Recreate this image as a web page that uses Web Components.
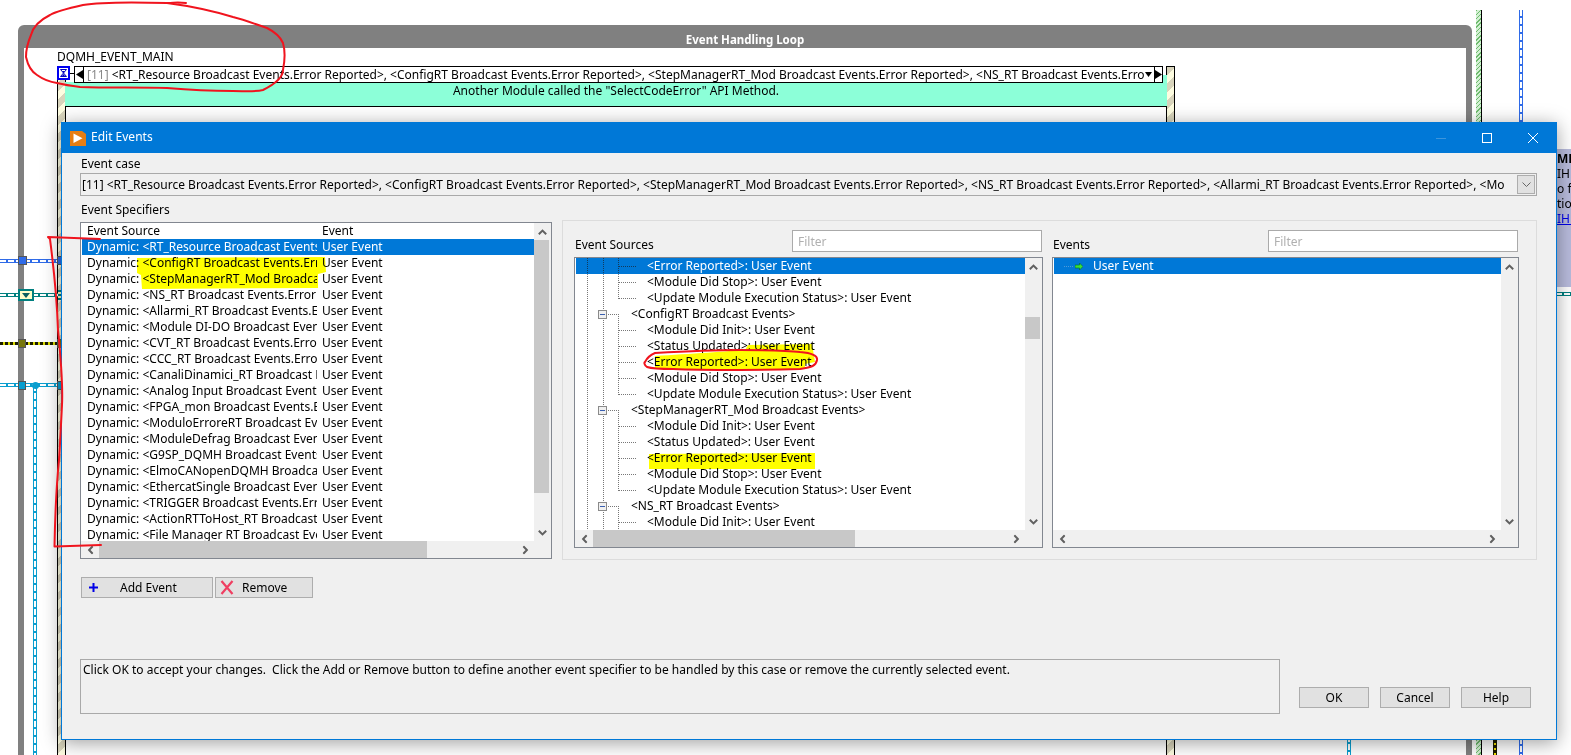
<!DOCTYPE html>
<html>
<head>
<meta charset="utf-8">
<title>Edit Events</title>
<style>
  html, body { margin: 0; height: 100%; }
  body {
    position: relative;
    width: 1571px;
    height: 755px;
    overflow: hidden;
    background: #fff;
    color: #000;
    font: 12px/16px "Noto Sans", "Open Sans", sans-serif;
  }
</style>
</head>
<body>
<lv-diagram></lv-diagram>

<edit-dialog>
  <field-label>Event case</field-label>
  <combo-box>[11] &lt;RT_Resource Broadcast Events.Error Reported&gt;, &lt;ConfigRT Broadcast Events.Error Reported&gt;, &lt;StepManagerRT_Mod Broadcast Events.Error Reported&gt;, &lt;NS_RT Broadcast Events.Error Reported&gt;, &lt;Allarmi_RT Broadcast Events.Error Reported&gt;, &lt;Module DI-DO Broad</combo-box>
  <field-label style="margin-top:6px">Event Specifiers</field-label>

  <panes-row slot="panes">
    <scroll-list slot="left" style="width:472px;height:337px;margin-top:2px" vtop="0" vh="253" hw="328">
      <spec-header></spec-header>
      <spec-row selected>Dynamic: &lt;RT_Resource Broadcast Events.E</spec-row>
      <spec-row>Dynamic: &lt;ConfigRT Broadcast Events.Error</spec-row>
      <spec-row>Dynamic: &lt;StepManagerRT_Mod Broadcast</spec-row>
      <spec-row>Dynamic: &lt;NS_RT Broadcast Events.Error Re</spec-row>
      <spec-row>Dynamic: &lt;Allarmi_RT Broadcast Events.Erro</spec-row>
      <spec-row>Dynamic: &lt;Module DI-DO Broadcast Events</spec-row>
      <spec-row>Dynamic: &lt;CVT_RT Broadcast Events.Error R</spec-row>
      <spec-row>Dynamic: &lt;CCC_RT Broadcast Events.Error F</spec-row>
      <spec-row>Dynamic: &lt;CanaliDinamici_RT Broadcast Ev</spec-row>
      <spec-row>Dynamic: &lt;Analog Input Broadcast Events.E</spec-row>
      <spec-row>Dynamic: &lt;FPGA_mon Broadcast Events.Err</spec-row>
      <spec-row>Dynamic: &lt;ModuloErroreRT Broadcast Even</spec-row>
      <spec-row>Dynamic: &lt;ModuleDefrag Broadcast Events</spec-row>
      <spec-row>Dynamic: &lt;G9SP_DQMH Broadcast Events.E</spec-row>
      <spec-row>Dynamic: &lt;ElmoCANopenDQMH Broadcast</spec-row>
      <spec-row>Dynamic: &lt;EthercatSingle Broadcast Events</spec-row>
      <spec-row>Dynamic: &lt;TRIGGER Broadcast Events.Error</spec-row>
      <spec-row>Dynamic: &lt;ActionRTToHost_RT Broadcast E</spec-row>
      <spec-row>Dynamic: &lt;File Manager RT Broadcast Event</spec-row>
    </scroll-list>

    <group-box slot="right">
      <filter-head>Event Sources</filter-head>
      <filter-head>Events</filter-head>
      <scroll-list style="height:291px" vtop="42" vh="22" hw="262">
        <tree-row selected>&lt;Error Reported&gt;: User Event</tree-row>
        <tree-row>&lt;Module Did Stop&gt;: User Event</tree-row>
        <tree-row last>&lt;Update Module Execution Status&gt;: User Event</tree-row>
        <tree-row parent>&lt;ConfigRT Broadcast Events&gt;</tree-row>
        <tree-row>&lt;Module Did Init&gt;: User Event</tree-row>
        <tree-row>&lt;Status Updated&gt;: User Event</tree-row>
        <tree-row>&lt;Error Reported&gt;: User Event</tree-row>
        <tree-row>&lt;Module Did Stop&gt;: User Event</tree-row>
        <tree-row last>&lt;Update Module Execution Status&gt;: User Event</tree-row>
        <tree-row parent>&lt;StepManagerRT_Mod Broadcast Events&gt;</tree-row>
        <tree-row>&lt;Module Did Init&gt;: User Event</tree-row>
        <tree-row>&lt;Status Updated&gt;: User Event</tree-row>
        <tree-row>&lt;Error Reported&gt;: User Event</tree-row>
        <tree-row>&lt;Module Did Stop&gt;: User Event</tree-row>
        <tree-row last>&lt;Update Module Execution Status&gt;: User Event</tree-row>
        <tree-row parent>&lt;NS_RT Broadcast Events&gt;</tree-row>
        <tree-row>&lt;Module Did Init&gt;: User Event</tree-row>
      </scroll-list>
      <scroll-list style="height:291px" hw="0">
        <event-row>User Event</event-row>
      </scroll-list>
    </group-box>
  </panes-row>

  <div slot="actions">
    <win-btn style="width:132px;justify-content:flex-start;padding-left:7px">
      <svg width="9" height="9" viewBox="0 0 9 9" style="margin-right:22px"><path d="M3.5 0h2v3.5H9v2H5.5V9h-2V5.5H0v-2h3.5z" fill="#0000e6"/></svg>Add Event
    </win-btn>
    <win-btn style="width:98px;justify-content:flex-start;padding-left:4px">
      <svg width="14" height="15" viewBox="0 0 14 15" style="margin-right:8px"><path d="M1.5 1l11 13M12.5 1l-11 13" stroke="#ef3f62" stroke-width="2.2" fill="none"/></svg>Remove
    </win-btn>
  </div>

  <help-box slot="help">Click OK to accept your changes.&nbsp; Click the Add or Remove button to define another event specifier to be handled by this case or remove the currently selected event.</help-box>
  <win-btn slot="footer" style="width:70px">OK</win-btn>
  <win-btn slot="footer" style="width:70px">Cancel</win-btn>
  <win-btn slot="footer" style="width:70px">Help</win-btn>
</edit-dialog>

<ink-marks></ink-marks>

<script>
const chevron = (rot) => `
  <svg width="9" height="6" viewBox="0 0 9 6" style="transform:rotate(${rot}deg)">
    <polyline points="0.8,5.2 4.5,1.6 8.2,5.2" fill="none" stroke="#606060" stroke-width="2"/>
  </svg>`;

class LvDiagram extends HTMLElement {
  connectedCallback() {
    this.attachShadow({ mode: "open" });
    this.shadowRoot.innerHTML = `
    <style>
      :host { position: absolute; inset: 0; display: block; overflow: hidden; }
      div, svg { position: absolute; box-sizing: border-box; }
      .loop {
        left: 18px; top: 25px; width: 1454px; height: 800px;
        border: 6px solid #808080; border-top-width: 23px; border-radius: 6px 6px 0 0;
      }
      .loop-title {
        left: 18px; top: 32px; width: 1454px; text-align: center;
        color: #fff; font-weight: bold; font-size: 11.5px;
      }
      .name { left: 57px; top: 49px; }
      .stripes {
        background: repeating-linear-gradient(135deg, #d8d4bc 0 6px, #fdfce0 6px 12px);
        border: 1px solid #000; border-width: 0 1px;
      }
      .case-l { left: 57px; top: 66px; width: 9px; height: 720px; }
      .case-r { left: 1166px; top: 66px; width: 9px; height: 720px; border-top-width: 1px; }
      .band {
        left: 65px; top: 82px; width: 1102px; height: 25px;
        background: #8cffd8; border-bottom: 1px solid #000;
        text-align: center; line-height: 17px;
      }
      .band-r { left: 1162px; top: 75px; width: 5px; height: 8px; background: #8cffd8; }
      .selector {
        left: 74px; top: 66px; width: 1089px; height: 17px;
        background: #fff; border: 1px solid #000;
        display: flex; align-items: center; white-space: pre; overflow: hidden;
      }
      .selector span.num { color: #888; }
      .sel-text { position: static; margin-left: 3px; flex: 1; line-height: 15px; overflow: hidden; }
      .tick { width: 1px; height: 15px; background: #000; position: static; flex: none; }
      .hour { left: 57px; top: 66px; width: 13px; height: 14px; border: 2px solid #0000f0; background: #fff; }
      .link { left: 70px; top: 73px; width: 4px; height: 1px; background: #000; }

      .wire-h, .wire-v { --c: #2f6be8; }
      .wire-h {
        height: 4px; border-top: 1px solid var(--c); border-bottom: 1px solid var(--c);
        background: repeating-linear-gradient(90deg, #fff 0 6px, var(--c) 6px 8px);
      }
      .wire-v {
        width: 4px; border-left: 1px solid var(--c); border-right: 1px solid var(--c);
        background: repeating-linear-gradient(180deg, #fff 0 6px, var(--c) 6px 8px);
      }
      .solid { height: 3px; background: repeating-linear-gradient(90deg, #1b1b00 0 3px, #d8d800 3px 5px); }
      .solid-v { width: 4px; background: repeating-linear-gradient(180deg, #1b1b00 0 3px, #f0e000 3px 5px); border: 1px solid #1b1b00; border-width: 0 1px; }
      .node { width: 8px; height: 9px; border: 1px solid #555; }
      .hatch {
        left: 1476px; top: 10px; width: 6px; height: 745px;
        border-right: 1px solid #000;
        background: repeating-linear-gradient(135deg, #6dbb6d 0 1px, #d3f0d3 1px 3px);
      }
      .note {
        left: 1540px; top: 149px; width: 31px; height: 138px; overflow: hidden;
        background: #b8bbdc; padding: 2px 0 0 17px; line-height: 15px; white-space: pre;
      }
      .note b { font-weight: bold; }
      .note u { color: #0000e6; }
    </style>

    <div class="loop"></div>
    <div class="loop-title">Event Handling Loop</div>
    <div class="name">DQMH_EVENT_MAIN</div>

    <div class="stripes case-l"></div>
    <div class="stripes case-r"></div>
    <div class="band">Another Module called the "SelectCodeError" API Method.</div>
    <div class="band-r"></div>
    <div class="selector">
      <svg style="position:static;flex:none;margin:0 0 0 1px" width="7" height="9" viewBox="0 0 7 9"><path d="M7 0v9L0 4.5z"/></svg>
      <div class="tick" style="margin-left:0"></div>
      <div class="sel-text"><span class="num">[11]</span> &lt;RT_Resource Broadcast Events.Error Reported&gt;, &lt;ConfigRT Broadcast Events.Error Reported&gt;, &lt;StepManagerRT_Mod Broadcast Events.Error Reported&gt;, &lt;NS_RT Broadcast Events.Error Reported&gt;,</div>
      <svg style="position:static;flex:none;margin-right:2px" width="7" height="5" viewBox="0 0 7 5"><path d="M0 0h7L3.5 5z"/></svg>
      <div class="tick"></div>
      <svg style="position:static;flex:none" width="7" height="9" viewBox="0 0 7 9"><path d="M0 0v9l7-4.5z"/></svg>
    </div>
    <div class="hour">
      <svg style="left:1px;top:1px" width="7" height="8" viewBox="0 0 7 8"><path d="M0.5 0.5h6L0.5 7.5h6z" fill="#fff" stroke="#0000c0"/><path d="M2 2h3L3.5 4zM2 7l1.5-2L5 7z" fill="#0000c0"/></svg>
    </div>
    <div class="link"></div>

    <!-- wires left of the dialog -->
    <div class="wire-h" style="left:0;top:259px;width:60px"></div>
    <div class="wire-h" style="left:0;top:293px;width:60px;--c:#007f7f"></div>
    <div class="solid" style="left:0;top:342px;width:60px"></div>
    <div class="wire-h" style="left:0;top:383px;width:60px;--c:#0a9ecf"></div>
    <div class="wire-v" style="left:33px;top:385px;height:370px;--c:#0a9ecf"></div>

    <div class="node" style="left:18px;top:256px;width:9px;background:#2f6be8"></div>
    <div class="node" style="left:57px;top:256px;background:#2f6be8"></div>
    <div class="node" style="left:18px;top:339px;background:#77770c"></div>
    <div class="node" style="left:57px;top:339px;background:#77770c"></div>
    <div class="node" style="left:18px;top:381px;background:#0a9ecf"></div>
    <div class="node" style="left:57px;top:381px;background:#0a9ecf"></div>
    <div style="left:32px;top:382px;width:7px;height:7px;border-radius:50%;background:#0a9ecf"></div>
    <div style="left:18px;top:289px;width:16px;height:12px;border:2px solid #007f7f;background:#fdfdc8">
      <svg style="left:2px;top:2px" width="8" height="5" viewBox="0 0 8 5"><path d="M0 0h8L4 5z" fill="#0a5f5f"/></svg>
    </div>
    <div style="left:58px;top:290px;width:3px;height:10px;background:repeating-linear-gradient(180deg,#007f7f 0 2px,#fdfdc8 2px 4px)"></div>

    <!-- right edge -->
    <div class="hatch"></div>
    <div class="wire-v" style="left:1519px;top:10px;height:745px"></div>
    <div class="solid-v" style="left:1493px;top:600px;height:155px"></div>
    <div class="wire-v" style="left:1347px;top:600px;height:155px;--c:#0a9ecf"></div>
    <div class="note"><b>MH</b>
IH
o fo
tion
<u>IHN</u></div>
    <div class="wire-h" style="left:1540px;top:292px;width:31px;--c:#007f7f"></div>
    `;
  }
}

class EditDialog extends HTMLElement {
  connectedCallback() {
    this.attachShadow({ mode: "open" });
    this.shadowRoot.innerHTML = `
    <style>
      :host {
        position: absolute; left: 61px; top: 122px; width: 1496px; height: 618px;
        box-sizing: border-box; display: flex; flex-direction: column;
        background: #f0f0f0; border: 1px solid #0078d7;
        box-shadow: 0 3px 18px rgba(0,0,0,.38);
      }
      .title {
        height: 30px; flex: none; background: #0078d7; color: #fff;
        display: flex; align-items: center; padding-left: 8px;
      }
      .title span { margin-left: 5px; margin-top: -2px; }
      .sys { margin-left: auto; display: flex; }
      .sys div { width: 46px; height: 30px; display: flex; align-items: center; justify-content: center; }
      .body { padding: 3px 19px 0 18px; display: flex; flex-direction: column; flex: 1; }
      .actions { margin-top: 17px; }
      ::slotted([slot=actions]) { display: flex; gap: 2px; padding-left: 1px; }
      .bottom { margin-top: 61px; display: flex; align-items: flex-end; }
      .footer { display: flex; gap: 11px; margin-left: 19px; margin-bottom: 6px; }
    </style>
    <div class="title">
      <svg width="16" height="16" viewBox="0 0 16 16">
        <path d="M0 1h12l4 3v12H0z" fill="#e67e13"/>
        <path d="M3.5 3.5L12.5 8.2L3.5 13z" fill="#fff"/>
      </svg>
      <span>Edit Events</span>
      <div class="sys">
        <div><svg width="10" height="10" viewBox="0 0 10 10"><path d="M0 5.5h10" stroke="#3d95dc"/></svg></div>
        <div><svg width="10" height="10" viewBox="0 0 10 10"><rect x=".5" y=".5" width="9" height="9" fill="none" stroke="#fff"/></svg></div>
        <div><svg width="10" height="10" viewBox="0 0 10 10"><path d="M0 0l10 10M10 0L0 10" stroke="#fff" fill="none"/></svg></div>
      </div>
    </div>
    <div class="body">
      <slot></slot>
      <slot name="panes"></slot>
      <div class="actions"><slot name="actions"></slot></div>
      <div class="bottom">
        <slot name="help"></slot>
        <div class="footer"><slot name="footer"></slot></div>
      </div>
    </div>`;
  }
}

class FieldLabel extends HTMLElement {
  connectedCallback() {
    this.attachShadow({ mode: "open" });
    this.shadowRoot.innerHTML = `
    <style>:host { display: block; height: 16px; padding-left: 1px; }</style>
    <slot></slot>`;
  }
}

class ComboBox extends HTMLElement {
  connectedCallback() {
    this.attachShadow({ mode: "open" });
    this.shadowRoot.innerHTML = `
    <style>
      :host {
        display: flex; align-items: center; height: 23px; margin-top: 1px;
        box-sizing: border-box; border: 1px solid #a9a9a9; background: #f0f0f0;
      }
      .txt { flex: 1; min-width: 0; overflow: hidden; white-space: nowrap; padding-left: 1px; }
      .btn {
        flex: none; width: 18px; height: 19px; margin: 0 1px 0 12px; box-sizing: border-box;
        border: 1px solid #adadad; background: #e1e1e1;
        display: flex; align-items: center; justify-content: center;
      }
      .btn svg { width: 9px; height: 5px; }
    </style>
    <div class="txt"><slot></slot></div>
    <div class="btn"><svg viewBox="0 0 9 5"><polyline points="0.5,0.5 4.5,4.5 8.5,0.5" fill="none" stroke="#666"/></svg></div>`;
  }
}

class PanesRow extends HTMLElement {
  connectedCallback() {
    this.attachShadow({ mode: "open" });
    this.shadowRoot.innerHTML = `
    <style>:host { display: flex; gap: 10px; margin-top: 2px; align-items: flex-start; }</style>
    <slot name="left"></slot><slot name="right"></slot>`;
  }
}

class GroupBox extends HTMLElement {
  connectedCallback() {
    this.attachShadow({ mode: "open" });
    this.shadowRoot.innerHTML = `
    <style>
      :host {
        display: grid; grid-template-columns: 469px 467px; grid-template-rows: 22px auto;
        column-gap: 9px; row-gap: 5px;
        width: 975px; height: 340px; box-sizing: border-box;
        border: 1px solid #dcdcdc; padding: 9px 17px 0 11px;
      }
    </style>
    <slot></slot>`;
  }
}

class FilterHead extends HTMLElement {
  connectedCallback() {
    this.attachShadow({ mode: "open" });
    this.shadowRoot.innerHTML = `
    <style>
      :host { display: flex; justify-content: space-between; align-items: flex-end; }
      .lbl { padding-left: 1px; margin-bottom: -1px; }
      .flt {
        width: 250px; height: 22px; box-sizing: border-box; margin-right: 1px;
        background: #fff; border: 1px solid #aaa; color: #b0b0b0;
        padding: 3px 0 0 5px;
      }
    </style>
    <div class="lbl"><slot></slot></div>
    <div class="flt">Filter</div>`;
  }
}

class ScrollList extends HTMLElement {
  connectedCallback() {
    const vh = +(this.getAttribute("vh") ?? 0);
    const vtop = +(this.getAttribute("vtop") ?? 0);
    const hw = +(this.getAttribute("hw") ?? 0);
    this.attachShadow({ mode: "open" });
    this.shadowRoot.innerHTML = `
    <style>
      :host {
        display: block; box-sizing: border-box; background: #fff;
        border: 1px solid #828790;
      }
      .grid {
        display: grid; height: 100%;
        grid-template-columns: minmax(0, 1fr) 17px;
        grid-template-rows: minmax(0, 1fr) 17px;
      }
      .view { overflow: hidden; padding-left: 1px; }
      .v, .h, .corner { background: #f0f0f0; display: flex; }
      .v { flex-direction: column; }
      .arr { display: flex; align-items: center; justify-content: center; flex: none; }
      .v .arr { height: 17px; }
      .h .arr { width: 18px; }
      .thumb { background: #c8c8c8; flex: none; }
      .v .thumb { margin: ${vtop}px 2px 0 0; height: ${vh}px; }
      .h .thumb { width: ${hw}px; }
      .end { margin: auto 0 0 0; }
      .h .end { margin: 0 0 0 auto; width: 17px; }
    </style>
    <div class="grid">
      <div class="view"><slot></slot></div>
      <div class="v">
        <div class="arr">${chevron(0)}</div>
        ${vh ? '<div class="thumb"></div>' : ""}
        <div class="arr end">${chevron(180)}</div>
      </div>
      <div class="h">
        <div class="arr">${chevron(-90)}</div>
        ${hw ? '<div class="thumb"></div>' : ""}
        <div class="arr end">${chevron(90)}</div>
      </div>
      <div class="corner"></div>
    </div>`;
  }
}

class SpecHeader extends HTMLElement {
  connectedCallback() {
    this.attachShadow({ mode: "open" });
    this.shadowRoot.innerHTML = `
    <style>
      :host { display: grid; grid-template-columns: 235px 1fr; height: 16px; }
      div { padding-left: 5px; }
      div:first-child { border-right: 1px solid #e5e5e5; }
    </style>
    <div>Event Source</div><div>Event</div>`;
  }
}

class SpecRow extends HTMLElement {
  connectedCallback() {
    this.attachShadow({ mode: "open" });
    this.shadowRoot.innerHTML = `
    <style>
      :host { display: grid; grid-template-columns: 235px 1fr; height: 16px; white-space: nowrap; }
      :host([selected]) { background: #0078d7; color: #fff; }
      div { padding-left: 5px; overflow: hidden; }
      div:first-child { border-right: 1px solid #e5e5e5; }
      :host([selected]) div:first-child { border-right-color: #cfe4f7; }
    </style>
    <div><slot></slot></div><div>User Event</div>`;
  }
}

class TreeRow extends HTMLElement {
  connectedCallback() {
    const parent = this.hasAttribute("parent");
    const last = this.hasAttribute("last");
    const guides = parent
      ? `<div class="g" style="width:28px">
           <div class="box"><i></i></div>
           <div class="hl" style="width:10px"></div>
           <div class="down"></div>
         </div>`
      : `<div class="g" style="width:15px"></div>
         <div class="g ${last ? "halfup" : ""}" style="width:29px">
           <div class="hl" style="width:17px"></div>
         </div>`;
    this.attachShadow({ mode: "open" });
    this.shadowRoot.innerHTML = `
    <style>
      :host { display: flex; height: 16px; white-space: nowrap; padding-left: 11px; }
      :host([selected]) { background: #0078d7; color: #fff; }
      .g {
        flex: none; height: 16px; box-sizing: border-box; position: relative;
        display: flex; align-items: center;
        background: linear-gradient(#777 50%, transparent 50%) 0 0 / 1px 2px repeat-y;
      }
      :host([selected]) .g { background-image: linear-gradient(#123a5c 50%, transparent 50%); }
      .halfup { background-size: 1px 2px; background-repeat: repeat-y; -webkit-mask: linear-gradient(#000,#000); }
      .hl {
        height: 1px; margin-left: 1px;
        background: linear-gradient(90deg, #777 50%, transparent 50%) 0 0 / 2px 1px repeat-x;
      }
      :host([selected]) .hl { background-image: linear-gradient(90deg, #123a5c 50%, transparent 50%); }
      .box {
        width: 9px; height: 9px; margin-left: -5px; flex: none; box-sizing: border-box;
        border: 1px solid #8a8a8a; background: #f0f0f0;
        display: flex; align-items: center; justify-content: center;
      }
      .box i { display: block; width: 5px; height: 1px; background: #3a5fb0; }
      .down {
        position: absolute; left: 15px; top: 8px; width: 1px; height: 8px;
        background: linear-gradient(#777 50%, transparent 50%) 0 0 / 1px 2px repeat-y;
      }
      .cut { position: absolute; left: 0; top: 9px; width: 1px; height: 7px; background: #fff; }
    </style>
    <div class="g" style="width:16px"></div>
    ${guides}
    <slot></slot>`;
    if (last) {
      const cut = document.createElement("div");
      cut.className = "cut";
      this.shadowRoot.querySelector(".halfup").append(cut);
    }
  }
}

class EventRow extends HTMLElement {
  connectedCallback() {
    this.attachShadow({ mode: "open" });
    this.shadowRoot.innerHTML = `
    <style>
      :host {
        display: flex; align-items: center; height: 16px; padding-left: 10px;
        background: #0078d7; color: #fff;
      }
      .dots {
        width: 9px; height: 1px; margin-right: 2px;
        background: linear-gradient(90deg, #4f9ad8 50%, transparent 50%) 0 0 / 2px 1px repeat-x;
      }
      svg { margin-right: 10px; }
    </style>
    <div class="dots"></div>
    <svg width="8" height="7" viewBox="0 0 8 7">
      <path d="M0 2h4.500V0L8 3.500 4.500 7V5H0z" fill="#39e239" stroke="#063" stroke-width=".6"/>
    </svg>
    <slot></slot>`;
  }
}

class WinBtn extends HTMLElement {
  connectedCallback() {
    this.attachShadow({ mode: "open" });
    this.shadowRoot.innerHTML = `
    <style>
      :host {
        display: flex; align-items: center; justify-content: center;
        height: 21px; box-sizing: border-box;
        background: #e1e1e1; border: 1px solid #adadad;
      }
    </style>
    <slot></slot>`;
  }
}

class HelpBox extends HTMLElement {
  connectedCallback() {
    this.attachShadow({ mode: "open" });
    this.shadowRoot.innerHTML = `
    <style>
      :host {
        display: block; width: 1200px; height: 55px; box-sizing: border-box; flex: none;
        border: 1px solid #a9a9a9; padding: 2px 2px;
      }
    </style>
    <slot></slot>`;
  }
}

class InkMarks extends HTMLElement {
  connectedCallback() {
    this.attachShadow({ mode: "open" });
    this.shadowRoot.innerHTML = `
    <style>
      :host { position: absolute; inset: 0; display: block; pointer-events: none; }
      svg { position: absolute; left: 0; top: 0; }
      .yellow { mix-blend-mode: multiply; }
      .red path { fill: none; stroke: #f0141e; stroke-width: 2; stroke-linecap: round; stroke-linejoin: round; }
    </style>
    <svg class="yellow" width="1571" height="755" fill="#ffff00">
      <path d="M137 258L325 257 326 272 318 274 318 288 142 289 141 275 137 273Z"/>
      <path d="M655 356C690 354 730 351 745 350L748 345 812 344 815 362 805 364 805 369 655 369Z"/>
      <path d="M649 454L815 453 815 469 649 469Z"/>
    </svg>
    <svg class="red" width="1571" height="755">
      <path d="M186 3C175 2 175 3 167 3C130 2 100 2 83 5C65 9 55 12 50 15C40 20 33 27 31 35C28 42 26 50 26 57C28 66 32 72 37 75C44 80 50 82 57 83C65 85 72 86 80 87C110 88 140 87 167 88C190 90 212 91 233 91C245 91 255 92 263 90C275 84 283 78 283 70C285 60 285 50 283 43C280 36 275 32 267 28C255 24 245 20 233 17C210 10 190 6 167 3"/>
      <path d="M100 239L48 237 50 239C54 270 57 300 58 330C61 360 63 385 62 405C61 425 60 445 59 460C56 490 55 520 54.500 546.500L101 545"/>
      <path d="M655 353C690 351 715 350 740 350C760 350 785 350 800 352C812 353 818 356 817 360C816 366 812 367 800 369C770 370 760 370 740 370C715 370 695 370 673 369C660 369 650 368 647 367C644 365 644 362 645 362C647 358 650 355 655 353"/>
    </svg>`;
  }
}

customElements.define("lv-diagram", LvDiagram);
customElements.define("edit-dialog", EditDialog);
customElements.define("field-label", FieldLabel);
customElements.define("combo-box", ComboBox);
customElements.define("panes-row", PanesRow);
customElements.define("group-box", GroupBox);
customElements.define("filter-head", FilterHead);
customElements.define("scroll-list", ScrollList);
customElements.define("spec-header", SpecHeader);
customElements.define("spec-row", SpecRow);
customElements.define("tree-row", TreeRow);
customElements.define("event-row", EventRow);
customElements.define("win-btn", WinBtn);
customElements.define("help-box", HelpBox);
customElements.define("ink-marks", InkMarks);
</script>
</body>
</html>
